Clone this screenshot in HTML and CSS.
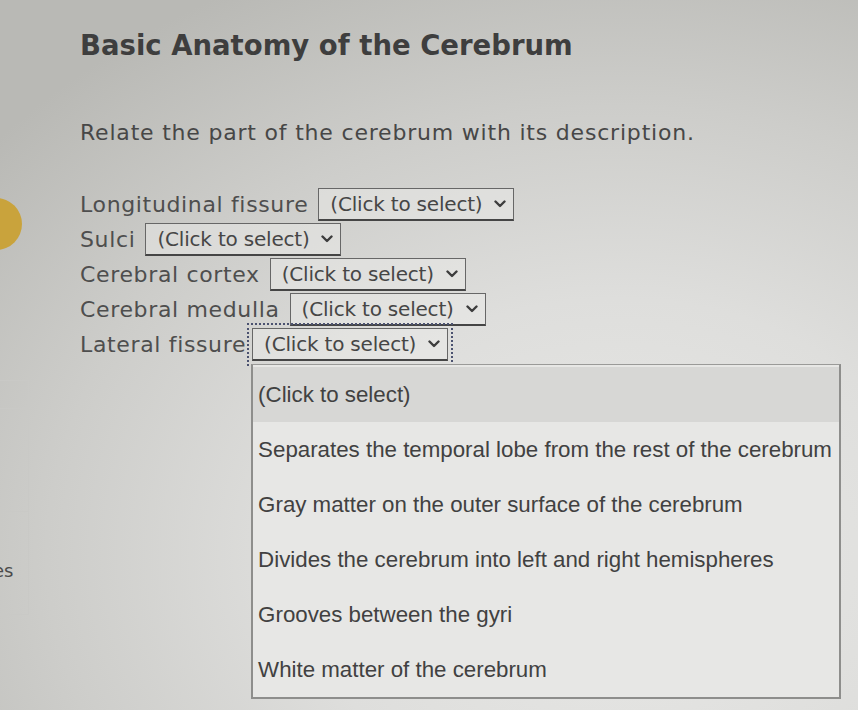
FILE: index.html
```html
<!DOCTYPE html>
<html lang="en">
<head>
<meta charset="utf-8">
<title>Basic Anatomy of the Cerebrum</title>
<link rel="stylesheet" href="styles.css">
</head>
<body>
<div class="page">
  <aside class="side">
    <div class="dot"></div>
    <div class="panel">
      <div class="cell cell-short"></div>
      <div class="cell"></div>
      <div class="cell"><span class="cell-text">es</span></div>
    </div>
  </aside>
  <main class="content">
    <h1 class="title">Basic Anatomy of the Cerebrum</h1>
    <p class="lead">Relate the part of the cerebrum with its description.</p>
    <div class="rows">
      <div class="row">
        <span class="label">Longitudinal fissure</span>
        <div class="select"><span class="select-text">(Click to select)</span><svg class="chev" viewBox="0 0 12 8" width="12" height="8"><path d="M1.5 1.5 L6 6 L10.5 1.5" fill="none" stroke="#3d3d3d" stroke-width="2.4" stroke-linecap="round" stroke-linejoin="round"/></svg></div>
      </div>
      <div class="row">
        <span class="label">Sulci</span>
        <div class="select"><span class="select-text">(Click to select)</span><svg class="chev" viewBox="0 0 12 8" width="12" height="8"><path d="M1.5 1.5 L6 6 L10.5 1.5" fill="none" stroke="#3d3d3d" stroke-width="2.4" stroke-linecap="round" stroke-linejoin="round"/></svg></div>
      </div>
      <div class="row">
        <span class="label">Cerebral cortex</span>
        <div class="select"><span class="select-text">(Click to select)</span><svg class="chev" viewBox="0 0 12 8" width="12" height="8"><path d="M1.5 1.5 L6 6 L10.5 1.5" fill="none" stroke="#3d3d3d" stroke-width="2.4" stroke-linecap="round" stroke-linejoin="round"/></svg></div>
      </div>
      <div class="row">
        <span class="label">Cerebral medulla</span>
        <div class="select"><span class="select-text">(Click to select)</span><svg class="chev" viewBox="0 0 12 8" width="12" height="8"><path d="M1.5 1.5 L6 6 L10.5 1.5" fill="none" stroke="#3d3d3d" stroke-width="2.4" stroke-linecap="round" stroke-linejoin="round"/></svg></div>
      </div>
      <div class="row">
        <span class="label label-last">Lateral fissure</span>
        <div class="select select-open"><span class="select-text">(Click to select)</span><svg class="chev" viewBox="0 0 12 8" width="12" height="8"><path d="M1.5 1.5 L6 6 L10.5 1.5" fill="none" stroke="#3d3d3d" stroke-width="2.4" stroke-linecap="round" stroke-linejoin="round"/></svg>
          <ul class="menu">
            <li class="opt opt-active">(Click to select)</li>
            <li class="opt">Separates the temporal lobe from the rest of the cerebrum</li>
            <li class="opt">Gray matter on the outer surface of the cerebrum</li>
            <li class="opt">Divides the cerebrum into left and right hemispheres</li>
            <li class="opt">Grooves between the gyri</li>
            <li class="opt">White matter of the cerebrum</li>
          </ul>
        </div>
      </div>
    </div>
  </main>
</div>
</body>
</html>
```
FILE: styles.css
```css
html, body {
  margin: 0;
  padding: 0;
  height: 100%;
}
body {
  background: radial-gradient(ellipse 95% 90% at 72% 78%, #e9e9e7 0%, #dededc 40%, #cdcdca 70%, #b9b9b5 100%);
  font-family: "DejaVu Sans", Lato, sans-serif;
  color: #4a4a4a;
  overflow: hidden;
}
.page {
  display: flex;
  min-height: 710px;
}
.side {
  width: 28px;
  flex: none;
  display: flex;
  flex-direction: column;
}
.dot {
  width: 52px;
  height: 52px;
  border-radius: 50%;
  background: #c9a33c;
  margin: 198px 0 0 -30px;
  flex: none;
}
.panel {
  margin: 130px 0 0 -20px;
  width: 48px;
  border: 1px solid #c9c9c6;
  border-left: none;
  display: flex;
  flex-direction: column;
}
.cell {
  height: 103px;
  border-top: 1px solid #c9c9c6;
  padding: 48px 0 0 13px;
  box-sizing: border-box;
}
.cell-short {
  height: 27px;
  border-top: none;
  padding: 0;
}
.cell-text {
  font-size: 18px;
  color: #4a4a4a;
}
.content {
  padding: 27px 0 0 52px;
  flex: 1;
}
.title {
  margin: 0;
  font-size: 27.5px;
  line-height: 36px;
  font-weight: 700;
  color: #3e3e3e;
}
.lead {
  margin: 56px 0 0;
  font-size: 22px;
  line-height: 28px;
  letter-spacing: 0.8px;
  color: #474747;
}
.rows {
  margin-top: 40px;
  display: flex;
  flex-direction: column;
}
.row {
  height: 35px;
  display: flex;
  align-items: center;
}
.label {
  font-size: 22px;
  color: #4e4e4e;
  margin-right: 10px;
  letter-spacing: 0.65px;
}
.label-last {
  margin-right: 6px;
}
.select {
  position: relative;
  box-sizing: border-box;
  width: 196px;
  height: 33px;
  border: 1px solid #676767;
  border-bottom: 2px solid #454545;
  background: rgba(238, 238, 236, 0.45);
  display: flex;
  align-items: center;
  justify-content: space-between;
  padding: 0 7px 0 11px;
}
.select-text {
  font-size: 20px;
  color: #464646;
  letter-spacing: -0.2px;
  white-space: nowrap;
}
.chev {
  flex: none;
}
.select-open {
  outline: 2px dotted #4b5270;
  outline-offset: 3px;
}
.menu {
  position: absolute;
  top: 35px;
  left: -2px;
  width: 590px;
  margin: 0;
  padding: 2px 0 0;
  list-style: none;
  box-sizing: border-box;
  background: #e7e7e5;
  border: 2px solid #8e8e8c;
  border-top: 1px solid #9a9a98;
  z-index: 2;
}
.opt {
  height: 55px;
  display: flex;
  align-items: center;
  padding-left: 5px;
  font-family: "Liberation Sans", Arial, sans-serif;
  font-size: 22.3px;
  white-space: nowrap;
  color: #414141;
}
.opt-active {
  background: #d7d7d5;
}
```
